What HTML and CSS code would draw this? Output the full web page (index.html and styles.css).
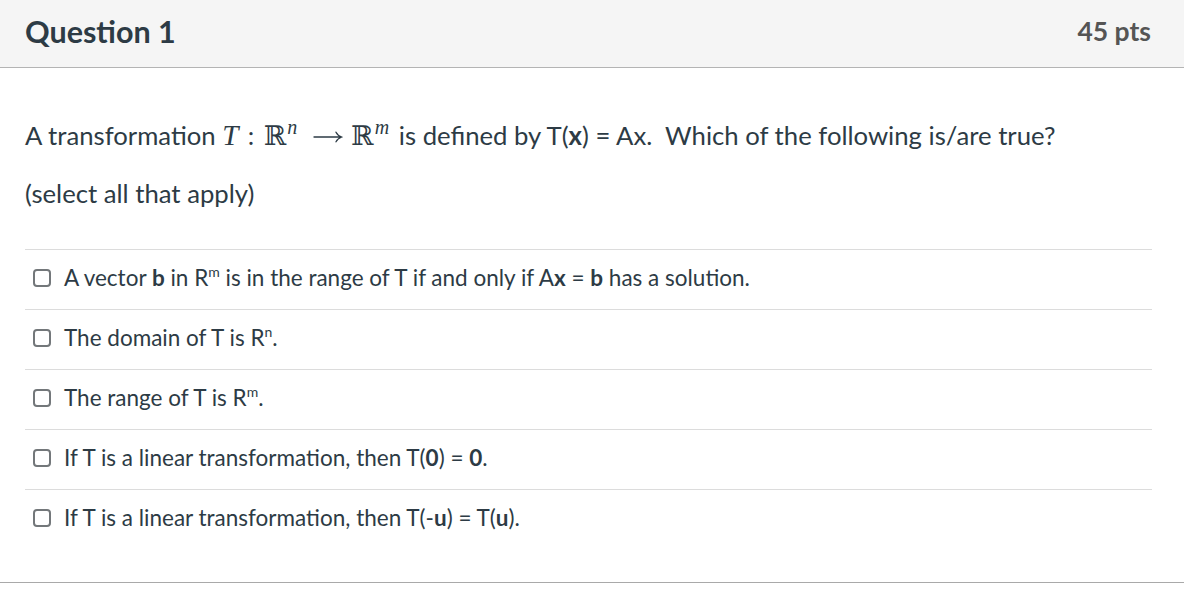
FILE: index.html
```html
<!DOCTYPE html>
<html lang="en">
<head>
<meta charset="utf-8">
<title>Question 1</title>
<link rel="stylesheet" href="styles.css">
</head>
<body>
<div class="question">
  <div class="header">
    <h2 class="title">Question 1</h2>
    <div class="pts">45 pts</div>
  </div>
  <div class="content">
    <p class="text">A transformation <span class="math"><i class="mi">T</i><span class="mo">:</span><span class="bb">ℝ</span><sup class="msup">n</sup><svg class="arrow" width="30" height="12" viewBox="0 0 30 12" aria-label="→"><path d="M1 6 H28.5 M23 1.2 C24.2 3.6 26 5.2 28.8 6 C26 6.8 24.2 8.4 23 10.8" fill="none" stroke="#2d3b45" stroke-width="1.3" stroke-linecap="round"/></svg><span class="bb">ℝ</span><sup class="msup last">m</sup></span> is defined by T(<b>x</b>) = Ax.&nbsp; Which of the following is/are true?</p>
    <p class="text">(select all that apply)</p>
    <div class="answers">
      <label class="answer"><span class="box"></span><span>A vector <b>b</b> in R<sup>m</sup> is in the range of T if and only if A<b>x</b> = <b>b</b> has a solution.</span></label>
      <label class="answer"><span class="box"></span><span>The domain of T is R<sup>n</sup>.</span></label>
      <label class="answer"><span class="box"></span><span>The range of T is R<sup>m</sup>.</span></label>
      <label class="answer"><span class="box"></span><span>If T is a linear transformation, then T(<b>0</b>) = <b>0</b>.</span></label>
      <label class="answer"><span class="box"></span><span>If T is a linear transformation, then T(-<b>u</b>) = T(<b>u</b>).</span></label>
    </div>
  </div>
</div>
</body>
</html>
```
FILE: styles.css
```css
* { box-sizing: border-box; }
html, body { margin: 0; padding: 0; background: #fff; }
body {
  font-family: Lato, "Liberation Sans", sans-serif;
  color: #2d3b45;
}
.question {
  border-bottom: 1px solid #a9a9a9;
  padding-bottom: 33px;
}
.header {
  display: flex;
  justify-content: space-between;
  align-items: center;
  height: 68px;
  padding: 0 33px 6px 25px;
  background: #f5f5f5;
  border-bottom: 1px solid #b4b4b4;
}
.title {
  margin: 0;
  font-size: 30.5px;
  font-weight: 700;
  color: #2d3b45;
}
.pts {
  font-size: 26.5px;
  font-weight: 700;
  color: #555;
}
.content {
  padding: 49px 32px 0 25px;
}
.text {
  margin: 0 0 20px;
  font-size: 25.7px;
  line-height: 37px;
}
.math { white-space: nowrap; }
.mi {
  font-family: "Liberation Serif", "DejaVu Serif", serif;
  font-style: italic;
  font-size: 29px;
  margin-right: 9px;
}
.mo {
  font-family: "Liberation Serif", serif;
  font-size: 27px;
  margin-right: 9px;
}
.bb {
  font-family: "DejaVu Serif", serif;
  font-size: 27px;
}
.msup {
  font-family: "Liberation Serif", serif;
  font-style: italic;
  font-size: 20px;
  vertical-align: 11px;
  line-height: 0;
  margin-left: 1px;
}
.msup.last { margin-right: 3px; }
.arrow {
  display: inline-block;
  vertical-align: 2px;
  margin: 0 8px 0 16px;
}
.answers {
  margin-top: 37px;
}
.answer {
  display: flex;
  align-items: center;
  gap: 13px;
  height: 60px;
  border-top: 1px solid #dcdcdc;
  padding: 0 0 4px 8px;
  font-size: 22.5px;
}
.answer sup {
  font-size: 14px;
  vertical-align: 9px;
  line-height: 0;
}
.box {
  flex: none;
  width: 18px;
  height: 18px;
  border: 2px solid #73777a;
  border-radius: 4px;
  background: #fff;
}
```
